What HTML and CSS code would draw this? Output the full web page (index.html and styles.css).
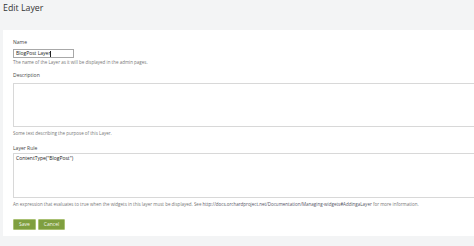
FILE: index.html
```html
<!DOCTYPE html>
<html>
<head>
<meta charset="utf-8">
<link rel="stylesheet" href="styles.css">
</head>
<body>
<header class="page-header">
  <h1 class="page-title">Edit Layer</h1>
</header>
<main class="panel">
  <div class="field">
    <label class="field-label">Name</label>
    <div class="text-input">BlogPost Layer<span class="caret"></span></div>
    <p class="hint">The name of the Layer as it will be displayed in the admin pages.</p>
  </div>
  <div class="field field-desc">
    <label class="field-label">Description</label>
    <div class="text-area area-desc"></div>
    <p class="hint">Some text describing the purpose of this Layer.</p>
  </div>
  <div class="field field-rule">
    <label class="field-label">Layer Rule</label>
    <div class="text-area area-rule">ContentType("BlogPost")</div>
    <p class="hint">An expression that evaluates to true when the widgets in this layer must be displayed. See <span class="link">http://docs.orchardproject.net/Documentation/Managing-widgets#AddingaLayer</span> for more information.</p>
  </div>
  <div class="actions">
    <button class="btn btn-save">Save</button>
    <button class="btn btn-cancel">Cancel</button>
  </div>
</main>
</body>
</html>
```
FILE: styles.css
```css
html, body {
  margin: 0;
  padding: 0;
}
body {
  width: 474px;
  height: 246px;
  overflow: hidden;
  background: #f3f4f5;
  font-family: "Open Sans", "Noto Sans", sans-serif;
  color: #333;
}
.page-header {
  height: 30px;
  padding: 0 3px;
  box-sizing: border-box;
}
.page-title {
  margin: 0;
  padding-top: 2px;
  font-size: 8.8px;
  line-height: 12px;
  font-weight: 400;
  color: #333;
}
.panel {
  margin-left: 3px;
  width: 471px;
  height: 206px;
  box-sizing: border-box;
  background: #fff;
  padding: 9px 0 0 10px;
  overflow: hidden;
}
.field-label {
  display: block;
  font-size: 5px;
  line-height: 7px;
  color: #444;
  margin-bottom: 3px;
}
.text-input {
  width: 61px;
  height: 9px;
  box-sizing: border-box;
  border: 1px solid #a8a8a8;
  font-size: 5px;
  line-height: 7px;
  padding-left: 2px;
  color: #222;
}
.caret {
  display: inline-block;
  width: 0.5px;
  height: 6px;
  background: #222;
  vertical-align: middle;
}
.hint {
  margin: 1px 0 0;
  font-size: 4.5px;
  line-height: 6px;
  color: #777;
  white-space: nowrap;
}
.link {
  color: #556;
}
.field-desc {
  margin-top: 7px;
}
.field-desc .field-label {
  margin-bottom: 3.5px;
}
.text-area {
  box-sizing: border-box;
  width: 480px;
  border: 1px solid #d8d8d8;
  font-size: 5px;
  line-height: 7px;
  padding: 1px 2px;
  color: #222;
}
.area-desc {
  height: 44px;
}
.field-desc .hint {
  margin-top: 3px;
}
.field-rule {
  margin-top: 9px;
}
.field-rule .field-label {
  margin-bottom: 1px;
}
.area-rule {
  height: 45px;
}
.field-rule .hint {
  margin-top: 3px;
}
.actions {
  display: flex;
  gap: 2px;
  margin-top: 12px;
}
.btn {
  height: 11px;
  box-sizing: border-box;
  border: 1px solid #a9c073;
  background: #7f9f3f;
  color: #f4f7ee;
  font-family: "Open Sans", "Noto Sans", sans-serif;
  font-size: 5px;
  line-height: 9px;
  padding: 0;
  margin: 0;
  border-radius: 1px;
}
.btn-save {
  width: 23px;
}
.btn-cancel {
  width: 27px;
}
```
